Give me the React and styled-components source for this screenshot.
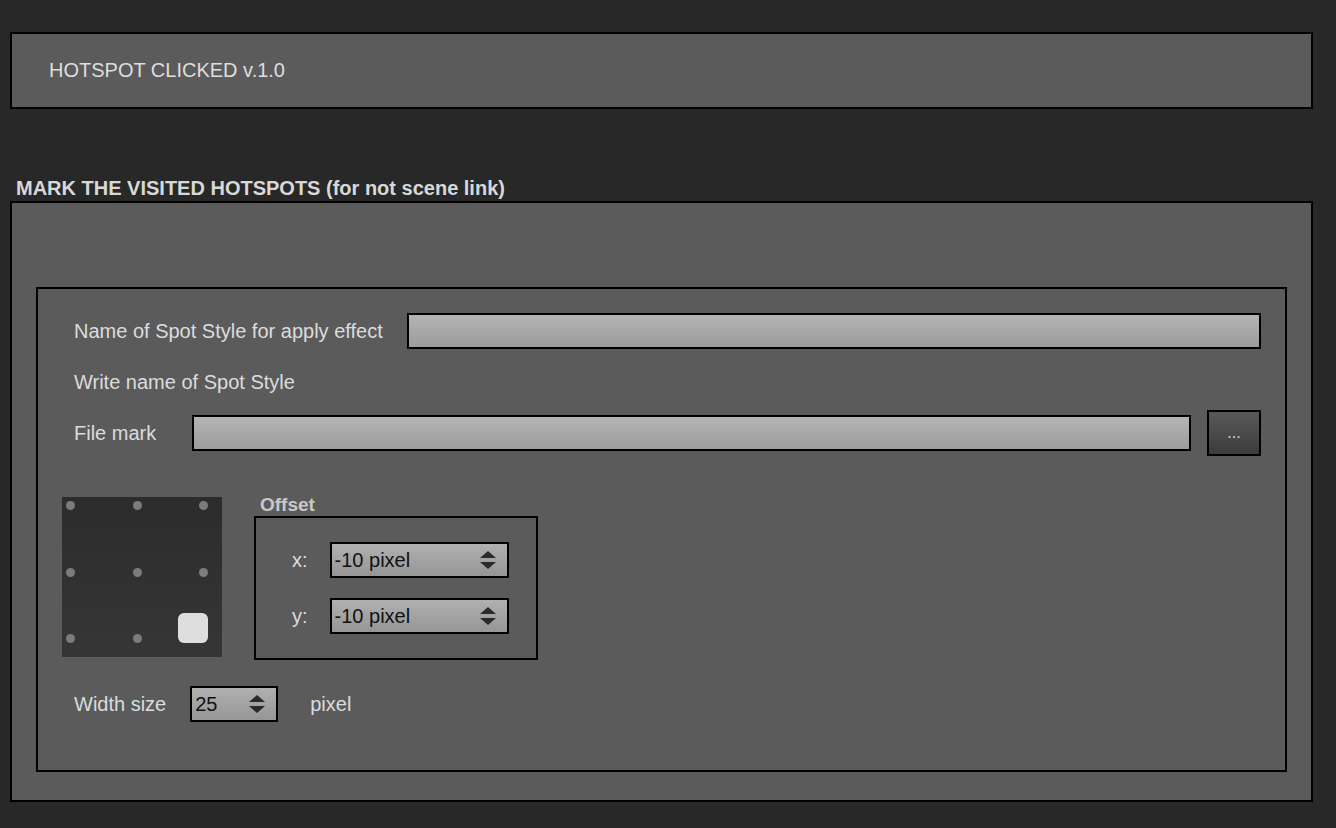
import React from "react";
import styled, { createGlobalStyle } from "styled-components";

const Global = createGlobalStyle`
  html, body { margin: 0; background: #282828; }
  body { font-family: "Liberation Sans", Arial, sans-serif; color: #dcdcdc; }
`;

const Page = styled.div`
  padding: 32px 23px 0 10px;
  width: 1303px;
`;
const Header = styled.div`
  height: 73px;
  background: #5b5b5b;
  border: 2px solid #000;
  display: flex;
  align-items: center;
  padding-left: 37px;
  font-size: 20px;
  color: #dedede;
`;
const SectionTitle = styled.div`
  margin: 67px 0 1px 6px;
  font-weight: bold;
  font-size: 20px;
  color: #d8d8d8;
  line-height: 24px;
`;
const Panel = styled.div`
  background: #5b5b5b;
  border: 2px solid #000;
  padding: 84px 24px 24px 24px;
  height: 489px;
`;
const Inner = styled.div`
  border: 2px solid #000;
  height: 485px;
  padding: 24px 24px 0 36px;
  box-sizing: border-box;
`;
const Row = styled.div`
  display: flex;
  align-items: center;
  gap: ${p => p.$gap || 0}px;
  height: ${p => p.$h || 36}px;
  margin-bottom: ${p => p.$mb || 0}px;
`;
const Label = styled.span`
  font-size: 20px;
  color: #dcdcdc;
  white-space: nowrap;
  width: ${p => (p.$w ? p.$w + "px" : "auto")};
`;
const TextInput = styled.div`
  flex: 1;
  height: 36px;
  box-sizing: border-box;
  border: 2px solid #000;
  background: linear-gradient(#b4b4b4, #9c9c9c);
`;
const Browse = styled.div`
  width: 54px;
  height: 46px;
  box-sizing: border-box;
  border: 2px solid #000;
  background: linear-gradient(#595959, #3c3c3c);
  color: #ddd;
  font-size: 16px;
  display: flex;
  align-items: center;
  justify-content: center;
  margin-left: 16px;
`;
const Lower = styled.div`
  display: flex;
  gap: 32px;
  margin-top: 42px;
  margin-left: -12px;
`;
const Picker = styled.div`
  position: relative;
  width: 160px;
  height: 160px;
  margin-top: 4px;
  background: linear-gradient(#2c2c2c, #363636);
`;
const Dot = styled.span`
  position: absolute;
  width: 9px;
  height: 9px;
  border-radius: 50%;
  background: #7c7c7c;
`;
const Selected = styled.span`
  position: absolute;
  left: 116px;
  top: 116px;
  width: 30px;
  height: 30px;
  border-radius: 6px;
  background: #dedede;
`;
const OffsetWrap = styled.div`
  display: flex;
  flex-direction: column;
`;
const OffsetTitle = styled.div`
  font-weight: bold;
  font-size: 19px;
  color: #c8c8c8;
  margin-left: 6px;
  height: 23px;
  line-height: 23px;
`;
const OffsetBox = styled.div`
  border: 2px solid #000;
  width: 284px;
  height: 144px;
  box-sizing: border-box;
  padding: 24px 0 0 36px;
  display: flex;
  flex-direction: column;
  gap: 20px;
`;
const Spin = styled.div`
  width: ${p => p.$w}px;
  height: 36px;
  box-sizing: border-box;
  border: 2px solid #000;
  background: linear-gradient(#b0b0b0, #969696);
  color: #111;
  font-size: 20px;
  display: flex;
  align-items: center;
  justify-content: space-between;
  padding: 0 8px 0 3px;
`;
const Arrows = () => (
  <svg width="22" height="22" viewBox="0 0 22 22">
    <path d="M3 9 L11 2 L19 9 Z" fill="#2a2a2a" />
    <path d="M3 13 L11 20 L19 13 Z" fill="#2a2a2a" />
  </svg>
);

const dotPos = [
  [4, 4], [71, 4], [137, 4],
  [4, 71], [71, 71], [137, 71],
  [4, 137], [71, 137],
];

export default function App() {
  return (
    <>
      <Global />
      <Page>
        <Header>HOTSPOT CLICKED v.1.0</Header>
        <SectionTitle>MARK THE VISITED HOTSPOTS (for not scene link)</SectionTitle>
        <Panel>
          <Inner>
            <Row $gap={24} $mb={16}>
              <Label>Name of Spot Style for apply effect</Label>
              <TextInput />
            </Row>
            <Row $h={34} $mb={16}>
              <Label>Write name of Spot Style</Label>
            </Row>
            <Row>
              <Label $w={118}>File mark</Label>
              <TextInput />
              <Browse>...</Browse>
            </Row>
            <Lower>
              <Picker>
                {dotPos.map(([l, t], i) => (
                  <Dot key={i} style={{ left: l, top: t }} />
                ))}
                <Selected />
              </Picker>
              <OffsetWrap>
                <OffsetTitle>Offset</OffsetTitle>
                <OffsetBox>
                  <Row $gap={22}>
                    <Label>x:</Label>
                    <Spin $w={179}>-10 pixel<Arrows /></Spin>
                  </Row>
                  <Row $gap={22}>
                    <Label>y:</Label>
                    <Spin $w={179}>-10 pixel<Arrows /></Spin>
                  </Row>
                </OffsetBox>
              </OffsetWrap>
            </Lower>
            <Row $gap={24} style={{ marginTop: 26 }}>
              <Label>Width size</Label>
              <Spin $w={88}>25<Arrows /></Spin>
              <Label style={{ marginLeft: 8 }}>pixel</Label>
            </Row>
          </Inner>
        </Panel>
      </Page>
    </>
  );
}
